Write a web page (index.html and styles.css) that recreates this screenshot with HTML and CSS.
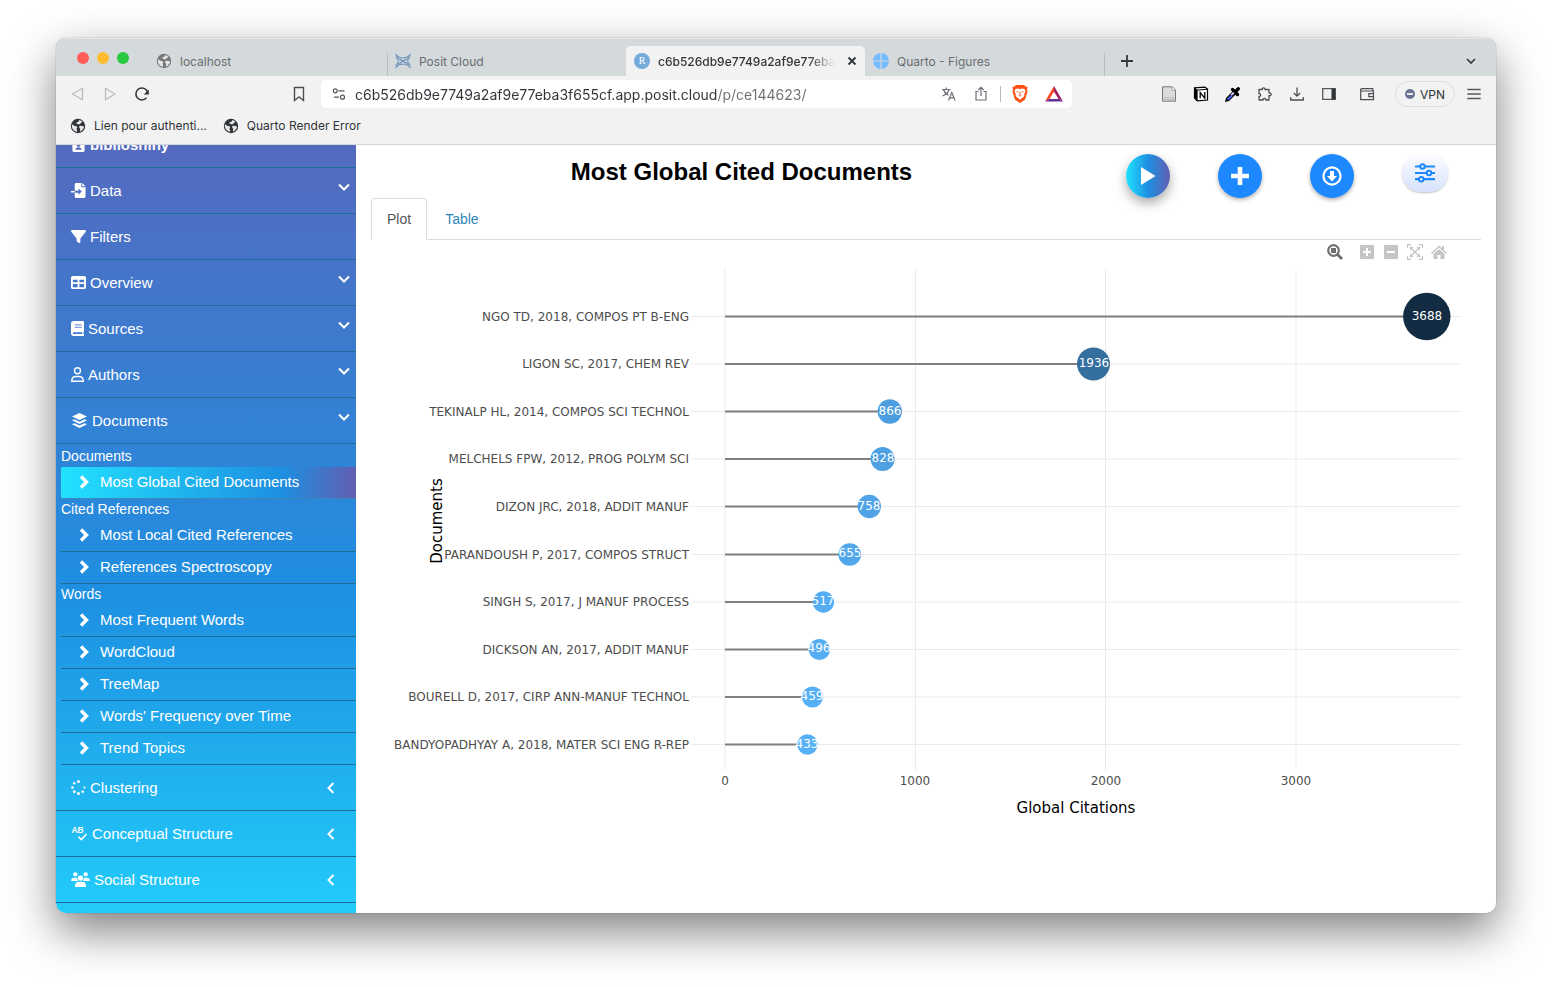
FILE: index.html
```html
<!DOCTYPE html>
<html lang="en">
<head>
  <meta charset="UTF-8" />
  <meta name="viewport" content="width=device-width, initial-scale=1.0"/>
  <title>biblioshiny – Most Global Cited Documents</title>
  <link rel="stylesheet" href="styles.css">
</head>
<body>
  <!-- shared icons -->
  <svg class="defs" aria-hidden="true">
    <symbol id="globe" viewBox="0 0 16 16">
      <circle cx="8" cy="8" r="7.2" fill="currentColor"/>
      <path class="land" d="M2 6.300c1.500 1.300 2.800 1.800 4.400 1.900 1.100.7.900 1.600.1 2.300.2 1 .8 1.900.6 3.200C4 13.300 1.900 10.900 1.900 8c0-.6 0-1.200.1-1.700zM9.300 1.900c1.400.3 2.400.9 3.200 1.800-.6.7-1.300.8-1.900 1.200-.2 1.300-1.200 1.500-2.300 1.400-.8-.5-2-.4-2.100-1.600.9-.8 2.700-.7 3.100-2.800zM9.800 7.700c1.500-.3 3 .4 4.300.8-.4 2.400-1.900 4.200-4 5.100-.3-1.300.3-2 .1-2.800-.7-.9-1.800-1.700-.4-3.100z"/>
    </symbol>
    <symbol id="down" viewBox="0 0 12 8"><path d="M1 1.500l5 5 5-5" fill="none" stroke="currentColor" stroke-width="2"/></symbol>
    <symbol id="left" viewBox="0 0 8 12"><path d="M6.500 1L1.500 6l5 5" fill="none" stroke="currentColor" stroke-width="2"/></symbol>
    <symbol id="right" viewBox="0 0 10 14"><path d="M2 1.500L7.500 7 2 12.500" fill="none" stroke="currentColor" stroke-width="3.400"/></symbol>
  </svg>

  <div class="window">
    <div class="tabbar">
      <div class="lights"><i class="red"></i><i class="amber"></i><i class="green"></i></div>
      <button class="tab"><svg class="icon"><use href="#globe"/></svg><span>localhost</span></button>
      <button class="tab line">
        <svg class="icon" viewBox="0 0 16 16" fill="none" stroke="#6d94b8" stroke-width="1"><path d="M.5 1.500Q8 8.500 15.500 1.500M.5 14.500Q8 7.500 15.500 14.500M.5 1.500Q6 8 .5 14.500M15.500 1.500Q10 8 15.500 14.500M.5 4.500Q8 9 15.500 11.500M15.500 4.500Q8 9 .5 11.500M.5 1.500L15.500 14.500M15.500 1.500L.5 14.500"/></svg>
        <span>Posit Cloud</span>
      </button>
      <button class="tab active">
        <svg class="icon" viewBox="0 0 16 16"><circle cx="8" cy="8" r="8" fill="#75aadb"/><text class="r-mark" x="8" y="11">R</text></svg>
        <span class="fade">c6b526db9e7749a2af9e77eba3f</span>
        <svg class="close" viewBox="0 0 10 10"><path d="M1.500 1.500l7 7M8.500 1.500l-7 7" stroke="#303438" stroke-width="1.800"/></svg>
      </button>
      <button class="tab">
        <svg class="icon" viewBox="0 0 16 16"><circle cx="8" cy="8" r="8" fill="#75bbff"/><path d="M8 0v16M0 8h16" stroke="#d4d9dc" stroke-width="1.200"/></svg>
        <span>Quarto - Figures</span>
      </button>
      <button class="new-tab line" aria-label="New tab"><svg viewBox="0 0 12 12"><path d="M6 0v12M0 6h12" stroke="#35393c" stroke-width="1.800"/></svg></button>
      <button class="all-tabs" aria-label="Search tabs"><svg viewBox="0 0 10 10"><path d="M1 3l4 4 4-4" fill="none" stroke="#35393c" stroke-width="1.700"/></svg></button>
    </div>

    <div class="toolbar">
      <div class="nav">
        <button aria-label="Back"><svg class="icon" viewBox="0 0 16 16"><path d="M12.500 2.200v11.600L2.500 8z" fill="none" stroke="#b9bbbd" stroke-width="1.300" stroke-linejoin="round"/></svg></button>
        <button aria-label="Forward"><svg class="icon" viewBox="0 0 16 16"><path d="M3.500 2.200v11.600L13 8z" fill="none" stroke="#b9bbbd" stroke-width="1.300" stroke-linejoin="round"/></svg></button>
        <button aria-label="Reload"><svg class="icon" viewBox="0 0 16 16"><path d="M12.500 11.800A6 6 0 1 1 13.600 6" fill="none" stroke="#303438" stroke-width="1.500"/><path d="M14.800 3.500v5h-5z" fill="#303438"/></svg></button>
        <button class="bookmark" aria-label="Bookmark"><svg class="icon" viewBox="0 0 16 16"><path d="M3.500 1.500h9v13L8 10.800l-4.500 3.700z" fill="none" stroke="#4b4f53" stroke-width="1.400"/></svg></button>
      </div>
      <div class="address">
        <svg class="icon" viewBox="0 0 16 16" fill="none" stroke="#55595c" stroke-width="1.200"><circle cx="4.300" cy="4.800" r="2"/><path d="M7.500 4.800h6M3 11.200h5"/><circle cx="11.500" cy="11.200" r="2"/></svg>
        <input type="text" aria-label="Address" value="c6b526db9e7749a2af9e77eba3f655cf.app.posit.cloud/p/ce144623/">
        <button aria-label="Translate"><svg class="icon" viewBox="0 0 16 16" fill="none" stroke="#6b6f73" stroke-width="1.200"><path d="M1 3.500h8.500M5.200 1.500v2M2.500 3.500c.8 2.800 3 4.800 5 5.700M8 3.500C7.300 6.500 4.500 8.800 1.500 10M7.500 14.500l3.300-8 3.300 8M8.700 11.800h4.200"/></svg></button>
        <button aria-label="Share"><svg class="icon" viewBox="0 0 16 16" fill="none" stroke="#6b6f73" stroke-width="1.200"><path d="M5.500 5.500h-2.500v8.500h10V5.500h-2.500M8 10V1.500M5.300 4L8 1.300 10.700 4"/></svg></button>
        <i class="divider"></i>
        <button aria-label="Brave Shields"><svg class="icon-lg" viewBox="0 0 18 18"><path d="M5 0h8l1.800 1.700L16.500 1.800 16 5l.6 1-2.400 8.500L9 18l-5.200-3.500L1.400 6 2 5l-.5-3.200 1.700-.1z" fill="#fb4f14"/><path d="M4.500 4L7 3.600l2 .5 2-.5 2.500.4 1.200 2-1.600 3.400.4 1.600-1.800 1.500L9 14.700l-2.700-2.200L4.500 11l.4-1.600L3.300 6z" fill="#fff"/><path d="M5.500 6.600l2 .6M12.500 6.600l-2 .6M9 7v3M7.700 10.300l1.300.8 1.300-.8" stroke="#fb4f14" stroke-width=".9" fill="none"/></svg></button>
        <button aria-label="Brave Rewards"><svg class="icon-lg" viewBox="0 0 18 18"><path d="M9 1v5.500L4.500 14 0 16.500z" fill="#ff4724"/><path d="M9 1l9 15.500-4.500-2.500L9 6.500z" fill="#9e1f63"/><path d="M0 16.500L4.500 14h9l4.500 2.500z" fill="#662d91"/></svg></button>
      </div>
      <div class="tools">
        <button aria-label="Reader"><svg class="icon" viewBox="0 0 16 16"><path d="M1.500 .8h9.800l3.200 3.200v11.200h-13z" fill="#dcdcdc" stroke="#777" stroke-width="1"/><path d="M11 1v3.500h3.500" fill="#fff" stroke="#999" stroke-width=".8"/><path d="M3.500 11.800h9v1.500h-9z" fill="#fff" stroke="#888" stroke-width=".6"/></svg></button>
        <button aria-label="Notion"><svg class="icon" viewBox="0 0 16 16"><path d="M1.500 1.800l10.300-.7 2.700 1.900v11l-10 .9-3-3.200z" fill="#fff" stroke="#000" stroke-width="1.200"/><path d="M1.500 1.800l2.600 2.300v10.800l-2.600-3zM4.100 4.100l10.400-.8" fill="#000" stroke="#000" stroke-width="1"/><path d="M7.200 12.300V6.500l4.600 5.600V6" fill="none" stroke="#000" stroke-width="1.300"/></svg></button>
        <button aria-label="Color picker"><svg class="icon" viewBox="0 0 16 16"><path d="M9 5L1.700 12.300 1 15l2.700-.7L11 7z" fill="#3f5fe0" stroke="#000" stroke-width="1.500"/><path d="M7.500 3.500l5 5M11.300 4.700l2-2" stroke="#000" stroke-width="3.400" stroke-linecap="round"/><path d="M2.500 12.500L5 10h3l-4.500 4.200z" fill="#3f5fe0"/><path d="M8.200 6L5.500 8.700l1.500.6L9.500 7z" fill="#e8ecff"/></svg></button>
        <button aria-label="Extensions"><svg class="icon" viewBox="0 0 16 16"><path d="M2 3.500h3.300c-.5-2.300 3-2.300 2.600 0H12v3.300c2.900-.4 2.900 3.300 0 2.900V14H8.800c.2-2.200-3-2.200-2.800 0H2v-3.500c2.200.1 2.200-3 0-2.900z" fill="none" stroke="#4b4f53" stroke-width="1.300" stroke-linejoin="round"/></svg></button>
        <button aria-label="Downloads"><svg class="icon" viewBox="0 0 16 16"><path d="M8 1.500v8.500M4.800 7L8 10.200 11.200 7M1.700 11v3h12.600v-3" fill="none" stroke="#4b4f53" stroke-width="1.300"/></svg></button>
        <button aria-label="Side panel"><svg class="icon" viewBox="0 0 16 16"><path d="M1.700 2.700h12.600v10.600H1.700z" fill="none" stroke="#55595c" stroke-width="1.300"/><path d="M10.500 2.500h3.800v11h-3.800z" fill="#303438"/></svg></button>
        <button class="wallet" aria-label="Wallet"><svg class="icon" viewBox="0 0 16 16" fill="none" stroke="#4b4f53" stroke-width="1.200"><path d="M13.800 5.500V2.600H3.200C1 2.600 1 5 2.700 5h11.800v8.700H1.700V3.500M14.500 7.700H9.800v3h4.700"/></svg></button>
        <button class="vpn"><i></i>VPN</button>
        <button class="menu-btn" aria-label="Menu"><svg class="icon" viewBox="0 0 16 16"><path d="M1.300 3.500h13.400M1.300 8h13.400M1.300 12.500h13.400" stroke="#55595c" stroke-width="1.400"/></svg></button>
      </div>
    </div>

    <div class="bookmarks">
      <a href="#"><svg class="icon"><use href="#globe"/></svg>Lien pour authenti...</a>
      <a href="#"><svg class="icon"><use href="#globe"/></svg>Quarto Render Error</a>
    </div>

    <div class="page">
      <nav class="sidebar">
        <a class="item first" href="#">
          <svg class="fa" viewBox="0 0 16 16"><path fill-rule="evenodd" d="M3 0h10q1.500 0 1.500 1.500v13q0 1.500-1.500 1.500H3q-1.500 0-1.500-1.500v-13Q1.500 0 3 0zM6 8.500A2 2 0 1 0 10 8.500 2 2 0 1 0 6 8.500zM4.500 13.500h7q-.5-2.500-3.500-2.500t-3.500 2.500z"/></svg>
          <b>biblioshiny</b>
        </a>
        <a class="item" href="#">
          <svg class="fa" viewBox="0 0 16 16"><path d="M5.500 0H11v4.500h4.500v9.800q0 1.700-1.700 1.700H5.500Q4 16 4 14.300v-4h4v2.300L11.500 9 8 5.800v2.400H4V1.500Q4 0 5.500 0zM12 0l3.500 3.500H12zM0 8.500h4v1.500H0z"/></svg>
          Data <svg class="down"><use href="#down"/></svg>
        </a>
        <a class="item" href="#">
          <svg class="fa" viewBox="0 0 512 512"><path d="M3.900 54.900C10.500 40.900 24.500 32 40 32H472c15.500 0 29.500 8.900 36.100 22.900s4.600 30.500-5.200 42.500L320 320.900V448c0 12.100-6.800 23.200-17.700 28.600s-23.800 4.300-33.500-3l-64-48c-8.100-6-12.800-15.500-12.800-25.600V320.900L9 97.300C-.7 85.400-2.800 68.800 3.900 54.900z"/></svg>
          Filters
        </a>
        <a class="item" href="#">
          <svg class="fa" viewBox="0 0 16 16"><path fill-rule="evenodd" d="M2 1h12q2 0 2 2v10q0 2-2 2H2q-2 0-2-2V3q0-2 2-2zM2 5v2.700h5V5zM9 5v2.700h5V5zM2 9.700V13h5V9.700zM9 9.700V13h5V9.700z"/></svg>
          Overview <svg class="down"><use href="#down"/></svg>
        </a>
        <a class="item" href="#">
          <svg class="fa slim" viewBox="0 0 14 16"><path fill-rule="evenodd" d="M3 0h10q1 0 1 1v10q0 .8-.6 1v2H14v2H3q-3 0-3-3V3q0-3 3-3zM3 12q-1 0-1 1t1 1h9v-2z"/><path d="M4 3.500h7.500v1.300H4zM4 6.200h7.500v1.300H4z" fill="#7f9fdc"/></svg>
          Sources <svg class="down"><use href="#down"/></svg>
        </a>
        <a class="item" href="#">
          <svg class="fa slim" viewBox="0 0 14 16"><path d="M3.800 4A3.200 3.200 0 1 0 10.200 4 3.200 3.200 0 1 0 3.800 4zM.8 15.200q0-5 4.700-5h3q4.700 0 4.700 5z" fill="none" stroke="#fff" stroke-width="1.500"/></svg>
          Authors <svg class="down"><use href="#down"/></svg>
        </a>
        <a class="item" href="#">
          <svg class="fa wide" viewBox="0 0 18 16"><path d="M9 0L17 3.700 9 7.500 1 3.700zM3.500 6.600L9 9.200l5.500-2.600L17 7.800l-8 3.800-8-3.800zM3.500 10.800L9 13.400l5.500-2.600L17 12l-8 3.900L1 12z"/></svg>
          Documents <svg class="down"><use href="#down"/></svg>
        </a>
        <div class="submenu">
          <h2>Documents</h2>
          <a class="active" href="#"><svg><use href="#right"/></svg>Most Global Cited Documents</a>
          <h2>Cited References</h2>
          <a href="#"><svg><use href="#right"/></svg>Most Local Cited References</a>
          <a href="#"><svg><use href="#right"/></svg>References Spectroscopy</a>
          <h2>Words</h2>
          <a href="#"><svg><use href="#right"/></svg>Most Frequent Words</a>
          <a href="#"><svg><use href="#right"/></svg>WordCloud</a>
          <a href="#"><svg><use href="#right"/></svg>TreeMap</a>
          <a href="#"><svg><use href="#right"/></svg>Words' Frequency over Time</a>
          <a href="#"><svg><use href="#right"/></svg>Trend Topics</a>
        </div>
        <a class="item" href="#">
          <svg class="fa" viewBox="0 0 16 16"><circle cx="8" cy="1.600" r="1.600"/><circle cx="8" cy="14.400" r="1.600"/><circle cx="1.600" cy="8" r="1.400"/><circle cx="14.400" cy="8" r="1.100"/><circle cx="3.500" cy="3.500" r="1.300"/><circle cx="3.500" cy="12.500" r="1.500"/><circle cx="12.500" cy="12.500" r="1.400"/></svg>
          Clustering <svg class="left"><use href="#left"/></svg>
        </a>
        <a class="item" href="#">
          <svg class="fa wide" viewBox="0 0 17 16"><text class="ab" x="0" y="7">AB</text><path d="M7.500 11.500l3 3 5.500-6" fill="none" stroke="#fff" stroke-width="1.800"/></svg>
          Conceptual Structure <svg class="left"><use href="#left"/></svg>
        </a>
        <a class="item" href="#">
          <svg class="fa people" viewBox="0 0 20 16"><circle cx="4.500" cy="2.500" r="2.300"/><circle cx="15.500" cy="2.500" r="2.300"/><circle cx="10" cy="6.500" r="2.900"/><path d="M0 9.500q0-3.500 3-3.500h2.500q.6 0 1 .3Q6.200 8.500 7.500 9.500zM20 9.500q0-3.500-3-3.500h-2.500q-.6 0-1 .3.300 2.200-1 3.200zM4 16q0-5.500 4-5.500h4q4 0 4 5.500z"/></svg>
          Social Structure <svg class="left"><use href="#left"/></svg>
        </a>
      </nav>

      <main>
        <header>
          <h1>Most Global Cited Documents</h1>
          <div class="actions">
            <button class="round run" aria-label="Run"><svg viewBox="0 0 16 18"><path d="M1 0l14.500 9L1 18z" fill="#fff"/></svg></button>
            <button class="round" aria-label="Add to report"><svg viewBox="0 0 18 18"><path d="M9 0v18M0 9h18" stroke="#fff" stroke-width="4.600"/></svg></button>
            <button class="round" aria-label="Export"><svg class="circle-down" viewBox="0 0 20 20"><circle cx="10" cy="10" r="8.600" fill="none" stroke="#fff" stroke-width="2.200"/><path d="M8 5h4v5h3l-5 5.500L5 10h3z" fill="#fff"/></svg></button>
            <button class="options" aria-label="Options"><svg viewBox="0 0 20 20" stroke="#1e88ff" fill="#f1f5ff" stroke-width="2"><path d="M.5 3.500h19M.5 10h19M.5 16.200h19" stroke-width="2.200" stroke-linecap="round"/><circle cx="7.500" cy="3.500" r="2.200"/><circle cx="14" cy="10" r="2.200"/><circle cx="6.300" cy="16.200" r="2.200"/></svg></button>
          </div>
        </header>

        <nav class="tabs">
          <a class="active" href="#">Plot</a>
          <a href="#">Table</a>
        </nav>

        <div class="modebar">
          <button class="on" aria-label="Zoom"><svg viewBox="0 0 16 16"><circle cx="6.500" cy="6.500" r="5.300" fill="none" stroke="currentColor" stroke-width="2.200"/><path d="M4 4h5v5H4z" fill="currentColor"/><path d="M10.500 10.500l4.500 4.500" stroke="currentColor" stroke-width="2.800"/></svg></button>
          <button aria-label="Zoom in"><svg viewBox="0 0 16 16"><path fill-rule="evenodd" d="M1 1h14v14H1zM7 4v3H4v2h3v3h2V9h3V7H9V4z"/></svg></button>
          <button aria-label="Zoom out"><svg viewBox="0 0 16 16"><path fill-rule="evenodd" d="M1 1h14v14H1zM4 7v2h8V7z"/></svg></button>
          <button aria-label="Autoscale"><svg viewBox="0 0 16 16"><path d="M.5 4V.5H4M12 .5h3.500V4M15.500 12v3.500H12M4 15.500H.5V12M4 4l8 8M12 4l-8 8" fill="none" stroke="currentColor" stroke-width="1.300"/><path d="M3 3h3.500L3 6.500zM13 3v3.500L9.500 3zM13 13H9.500L13 9.500zM3 13V9.500L6.500 13z"/></svg></button>
          <button aria-label="Reset axes"><svg viewBox="0 0 16 16"><path d="M8 1.500l3 2.800V2h2v4.100l3 2.800-1 1-7-6.400-7 6.400-1-1z"/><path d="M8 5l5.500 5v5h-4v-4h-3v4h-4v-5z"/></svg></button>
        </div>

        <svg class="chart" viewBox="0 0 1110 560" role="img" aria-label="Global citations by document">
          <path class="grid" d="M354 0v501M544.500 0v501M734.500 0v501M925 0v501"/>
          <path class="grid" d="M320 47.500h771M320 95h771M320 142.500h771M320 190h771M320 237.500h771M320 285.500h771M320 333h771M320 380.500h771M320 428h771M320 475.500h771"/>
          <path class="stem" d="M354 47.500h702M354 95h369M354 142.500h165M354 190h158M354 237.500h144M354 285.500h125M354 333h98M354 380.500h94M354 428h87M354 475.500h82"/>

          <g class="labels">
            <text x="318" y="52">NGO TD, 2018, COMPOS PT B-ENG</text>
            <text x="318" y="99">LIGON SC, 2017, CHEM REV</text>
            <text x="318" y="147">TEKINALP HL, 2014, COMPOS SCI TECHNOL</text>
            <text x="318" y="194">MELCHELS FPW, 2012, PROG POLYM SCI</text>
            <text x="318" y="242">DIZON JRC, 2018, ADDIT MANUF</text>
            <text x="318" y="290">PARANDOUSH P, 2017, COMPOS STRUCT</text>
            <text x="318" y="337">SINGH S, 2017, J MANUF PROCESS</text>
            <text x="318" y="385">DICKSON AN, 2017, ADDIT MANUF</text>
            <text x="318" y="432">BOURELL D, 2017, CIRP ANN-MANUF TECHNOL</text>
            <text x="318" y="480">BANDYOPADHYAY A, 2018, MATER SCI ENG R-REP</text>
          </g>

          <circle cx="1055.800" cy="47.500" r="23.700" fill="#132b43"/>
          <circle cx="722.500" cy="95" r="16.500" fill="#356f9f"/>
          <circle cx="518.800" cy="142.500" r="12.200" fill="#4c9ee0"/>
          <circle cx="511.600" cy="190" r="12" fill="#4da0e2"/>
          <circle cx="498.300" cy="237.500" r="11.700" fill="#4fa3e6"/>
          <circle cx="478.700" cy="285.500" r="11.300" fill="#51a7eb"/>
          <circle cx="452.400" cy="333" r="10.700" fill="#54adf3"/>
          <circle cx="448.400" cy="380.500" r="10.600" fill="#55adf4"/>
          <circle cx="441.400" cy="428" r="10.500" fill="#55aff6"/>
          <circle cx="436.400" cy="475.500" r="10.300" fill="#56b1f7"/>

          <g class="values">
            <text x="1056" y="51">3688</text>
            <text x="723" y="98">1936</text>
            <text x="519" y="146">866</text>
            <text x="512" y="193">828</text>
            <text x="498" y="241">758</text>
            <text x="479" y="288">655</text>
            <text x="452" y="336">517</text>
            <text x="448" y="383">496</text>
            <text x="441" y="431">459</text>
            <text x="436" y="479">433</text>
          </g>

          <g class="ticks">
            <text x="354" y="516">0</text>
            <text x="544" y="516">1000</text>
            <text x="735" y="516">2000</text>
            <text x="925" y="516">3000</text>
          </g>
          <text class="axis" x="705" y="544">Global Citations</text>
          <text class="axis" transform="translate(71 252) rotate(-90)">Documents</text>
        </svg>
      </main>
    </div>
  </div>
</body>
</html>
```
FILE: styles.css
```css
* { box-sizing: border-box; }

body {
  margin: 0;
  height: 100vh;
  padding: 38px 56px 74px;
  display: flex;
  background: white;
  font-family: "Liberation Sans", Arial, sans-serif;
  font-size: 15px;
}

button {
  padding: 0;
  border: none;
  background: none;
  font: inherit;
  color: inherit;
  display: flex;
  align-items: center;
  justify-content: center;
}

a {
  color: inherit;
  text-decoration: none;
}

svg {
  display: block;
  flex: none;
}

.defs {
  position: absolute;
  width: 0;
  height: 0;
}

.icon {
  width: 16px;
  height: 16px;
}

.icon-lg {
  width: 18px;
  height: 18px;
}

.window {
  flex: 1;
  min-width: 0;
  display: flex;
  flex-direction: column;
  border-radius: 10px;
  overflow: hidden;
  background: #f2f2f2;
  box-shadow: 0 0 1px rgba(0,0,0,0.6), 0 18px 46px rgba(0,0,0,0.5);
}

/* browser chrome */
.tabbar {
  display: flex;
  height: 38px;
  padding-top: 7px;
  background: #d4d9dc;
  border-top: 1px solid #e4e7e9;
  font-family: Inter, sans-serif;
  font-size: 12px;
  color: #6a6e71;
}

.lights {
  display: flex;
  gap: 8px;
  width: 92px;
  padding: 6px 0 0 21px;
}

.lights i {
  width: 12px;
  height: 12px;
  border-radius: 50%;
}

.red { background: #ff5f57; }
.amber { background: #febc2e; }
.green { background: #28c840; }

.tab {
  flex: 0 1 239px;
  min-width: 0;
  justify-content: flex-start;
  gap: 8px;
  padding: 0 8px;
  color: #6a6e71;
  white-space: nowrap;
}

.tab > .icon { color: #77797b; }
.land { fill: #e4e6e7; }

.line {
  background: linear-gradient(#b9bdc0, #b9bdc0) left bottom / 1px 23px no-repeat;
}

.tab.active {
  background: #f2f2f2;
  color: #303438;
  border-radius: 5px 5px 0 0;
  font-weight: 500;
}

.fade {
  flex: 1;
  min-width: 0;
  overflow: hidden;
  text-align: left;
  -webkit-mask-image: linear-gradient(to right, black 85%, transparent);
  mask-image: linear-gradient(to right, black 85%, transparent);
}

.close {
  width: 10px;
  height: 10px;
  margin-left: 4px;
}

.r-mark {
  font: 10px "Liberation Serif", serif;
  fill: white;
  text-anchor: middle;
}

.new-tab {
  width: 46px;
}

.new-tab svg {
  width: 12px;
  height: 12px;
}

.all-tabs {
  margin: 0 20px 0 auto;
}

.all-tabs svg {
  width: 10px;
  height: 10px;
}

.toolbar {
  display: flex;
  align-items: center;
  height: 36px;
  padding: 0 14px;
  font-family: Inter, sans-serif;
}

.nav {
  display: flex;
  gap: 16px;
  width: 237px;
}

.bookmark { margin-left: auto; }

.address {
  flex: 1;
  min-width: 0;
  display: flex;
  align-items: center;
  height: 28px;
  margin: 0 89px 0 14px;
  padding: 0 9px 0 10px;
  border-radius: 5px;
  background: white;
}

.address input {
  flex: 1;
  min-width: 0;
  padding: 0;
  margin-left: 8px;
  border: none;
  outline: none;
  font: 14px Inter, sans-serif;
  /* host dark, path grey */
  color: transparent;
  background: linear-gradient(to right, #303438 363px, #6b6f73 363px);
  -webkit-background-clip: text;
  background-clip: text;
}

.address button { margin-left: 16px; }
.address .divider + button { margin-left: 10px; }

.divider {
  width: 1px;
  height: 16px;
  margin-left: 11px;
  background: #b9bbbd;
}

.tools {
  display: flex;
  align-items: center;
  gap: 16px;
}

.wallet { margin-left: 6px; }

.vpn {
  gap: 5px;
  width: 60px;
  height: 26px;
  margin-left: 4px;
  border: 1px solid #dddee0;
  border-radius: 13px;
  font-size: 12px;
  color: #303438;
}

.vpn i {
  width: 10px;
  height: 10px;
  border-radius: 50%;
  background: linear-gradient(#e8e9ef, #e8e9ef) center / 6px 2px no-repeat #6b7190;
}

.menu-btn { margin-left: -5px; }

.bookmarks {
  display: flex;
  gap: 16px;
  height: 33px;
  padding: 0 14px 5px;
  border-bottom: 1px solid #d3d5d7;
  font: 12px Inter, sans-serif;
  color: #303438;
}

.bookmarks a {
  display: flex;
  align-items: center;
  gap: 8px;
}

/* app */
.page {
  flex: 1;
  min-height: 0;
  display: flex;
  background: white;
}

.sidebar {
  flex: none;
  width: 300px;
  overflow: hidden;
  color: white;
  background: linear-gradient(to bottom, #546abf, #1e90e2 59%, #22cbfa);
}

.item {
  display: flex;
  align-items: center;
  height: 46px;
  padding: 0 6px 0 15px;
  border-bottom: 1px solid #1f6c96;
}

.item.first { margin-top: -23px; }

.fa {
  width: 15px;
  height: 15px;
  margin-right: 4px;
  fill: white;
}

.fa.slim { width: 13px; }
.fa.wide { width: 17px; }
.fa.people { width: 19px; }

.ab { font: bold 9px "Liberation Sans", Arial, sans-serif; }

.down {
  width: 12px;
  height: 8px;
  margin: 0 0 8px auto;
}

.left {
  width: 8px;
  height: 12px;
  margin: 0 15px 0 auto;
}

.submenu {
  padding: 2px 0 0 5px;
}

.submenu h2 {
  margin: 0;
  font-size: 14px;
  font-weight: normal;
  line-height: 21px;
}

.submenu a {
  display: flex;
  align-items: center;
  gap: 11px;
  height: 32px;
  padding: 0 0 2px 18px;
  border-bottom: 1px solid #1f6c96;
}

.submenu a.active {
  background: linear-gradient(to right, #22e1ff, #1d8fe1 75%, #625eb1);
  border-bottom-color: #3f86b8;
}

.submenu svg {
  width: 10px;
  height: 14px;
}

main {
  flex: 1;
  min-width: 0;
  padding: 9px 15px 0;
}

header {
  display: flex;
  gap: 14px;
  padding-right: 33px;
}

h1 {
  flex: 1;
  margin: 0;
  font-size: 24px;
  line-height: 36px;
  text-align: center;
}

.actions {
  display: flex;
  align-items: flex-start;
  gap: 48px;
}

.round {
  width: 44px;
  height: 44px;
  border-radius: 50%;
  background: #1e88ff;
  box-shadow: 0 2px 4px rgba(0,0,0,0.3);
}

.round svg {
  width: 18px;
  height: 18px;
}

.round .circle-down {
  width: 20px;
  height: 20px;
}

.round.run {
  background: linear-gradient(to right, #22e1ff, #1d8fe1 50%, #625eb1);
  box-shadow: 0 5px 12px rgba(0,0,0,0.35);
}

.options {
  width: 46px;
  height: 38px;
  border-radius: 19px;
  background: linear-gradient(to bottom, #fdfdff, #d6e2fd);
  box-shadow: 0 1px 2px rgba(0,0,0,0.25);
}

.options svg {
  width: 20px;
  height: 20px;
}

.tabs {
  display: flex;
  border-bottom: 1px solid #ddd;
  font-size: 14px;
  line-height: 20px;
  color: #2f87ba;
}

.tabs a {
  margin: 0 2px -1px 0;
  padding: 10px 15px;
  border: 1px solid transparent;
  border-radius: 4px 4px 0 0;
}

.tabs .active {
  color: #555;
  background: white;
  border-color: #ddd #ddd white;
}

.modebar {
  display: flex;
  justify-content: flex-end;
  align-items: center;
  gap: 8px;
  height: 29px;
  padding: 0 34px 5px 0;
  color: #c5c5c5;
}

.modebar svg {
  width: 16px;
  height: 16px;
  fill: currentColor;
}

.modebar .on {
  color: #707070;
  margin-right: 8px;
}

.chart {
  width: 100%;
  font-family: "DejaVu Sans", Verdana, sans-serif;
  font-size: 12px;
}

.grid { stroke: #ebebeb; }

.stem {
  stroke: #7f7f7f;
  stroke-width: 2px;
}

.labels {
  fill: #4d4d4d;
  text-anchor: end;
}

.values {
  fill: white;
  text-anchor: middle;
}

.ticks {
  fill: #4d4d4d;
  text-anchor: middle;
}

.axis {
  font-size: 15px;
  text-anchor: middle;
}
```
